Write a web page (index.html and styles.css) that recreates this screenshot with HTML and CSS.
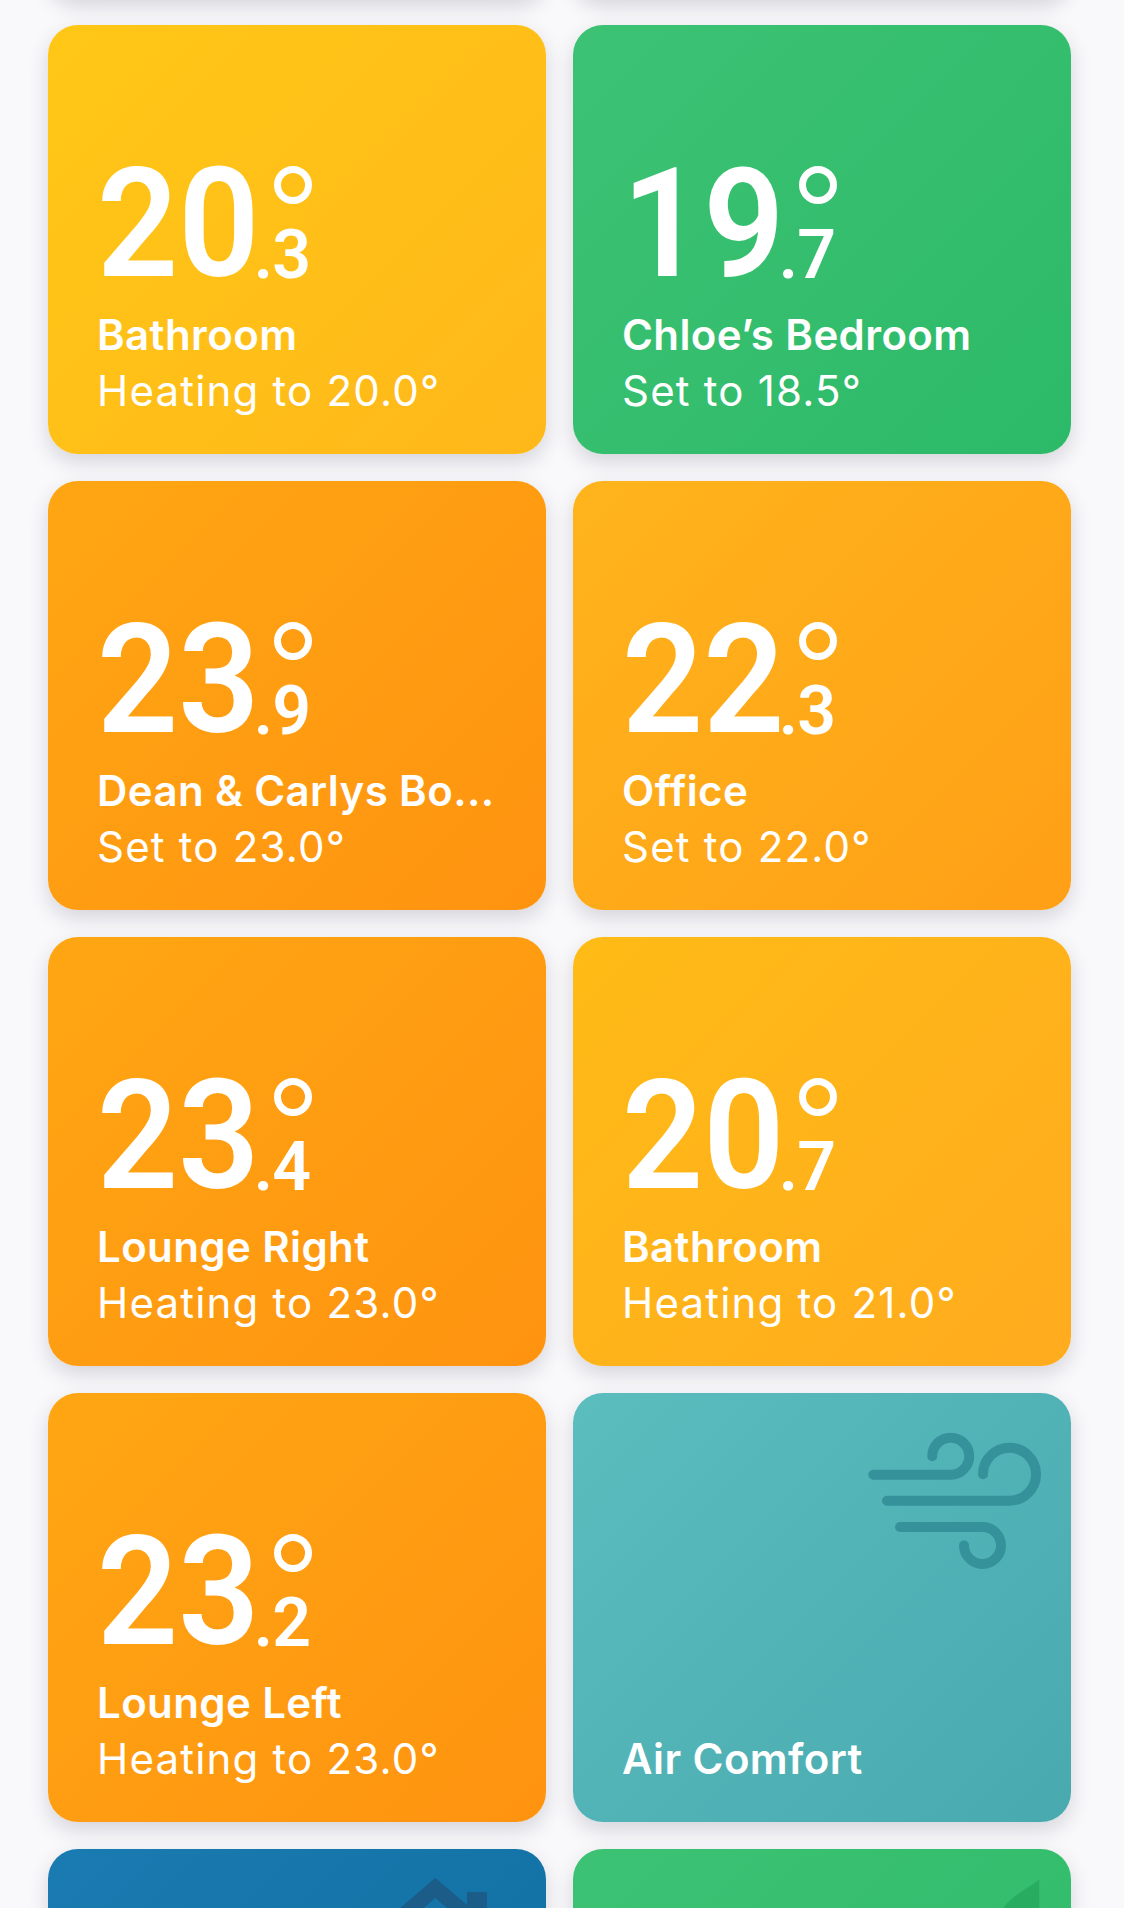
FILE: index.html
```html
<!DOCTYPE html>
<html lang="en">
<head>
  <meta charset="UTF-8">
  <meta name="viewport" content="width=device-width, initial-scale=1.0">
  <title>Home</title>
  <link rel="stylesheet" href="styles.css">
</head>
<body>
  <main class="tiles">
    <!-- row scrolled off the top, only its shadow shows -->
    <div class="tile tile-plain"></div>
    <div class="tile tile-plain"></div>

    <div class="tile tile-yellow">
      <div class="temp"><span class="temp-whole">20</span><span class="temp-side"><i class="ring"></i><span class="temp-frac">.3</span></span></div>
      <div class="tile-name">Bathroom</div>
      <div class="tile-status">Heating to 20.0°</div>
    </div>
    <div class="tile tile-green">
      <div class="temp"><span class="temp-whole">19</span><span class="temp-side"><i class="ring"></i><span class="temp-frac">.7</span></span></div>
      <div class="tile-name">Chloe’s Bedroom</div>
      <div class="tile-status">Set to 18.5°</div>
    </div>

    <div class="tile tile-orange">
      <div class="temp"><span class="temp-whole">23</span><span class="temp-side"><i class="ring"></i><span class="temp-frac">.9</span></span></div>
      <div class="tile-name">Dean &amp; Carlys Bo...</div>
      <div class="tile-status">Set to 23.0°</div>
    </div>
    <div class="tile tile-amber">
      <div class="temp"><span class="temp-whole">22</span><span class="temp-side"><i class="ring"></i><span class="temp-frac">.3</span></span></div>
      <div class="tile-name">Office</div>
      <div class="tile-status">Set to 22.0°</div>
    </div>

    <div class="tile tile-orange">
      <div class="temp"><span class="temp-whole">23</span><span class="temp-side"><i class="ring"></i><span class="temp-frac">.4</span></span></div>
      <div class="tile-name">Lounge Right</div>
      <div class="tile-status">Heating to 23.0°</div>
    </div>
    <div class="tile tile-gold">
      <div class="temp"><span class="temp-whole">20</span><span class="temp-side"><i class="ring"></i><span class="temp-frac">.7</span></span></div>
      <div class="tile-name">Bathroom</div>
      <div class="tile-status">Heating to 21.0°</div>
    </div>

    <div class="tile tile-orange">
      <div class="temp"><span class="temp-whole">23</span><span class="temp-side"><i class="ring"></i><span class="temp-frac">.2</span></span></div>
      <div class="tile-name">Lounge Left</div>
      <div class="tile-status">Heating to 23.0°</div>
    </div>
    <div class="tile tile-teal">
      <svg class="icon icon-wind" viewBox="0 0 220 180" width="220" height="180" fill="none" stroke="currentColor" stroke-width="10" stroke-linecap="round">
        <path d="M33.3 64.7H110.7A18.5 18.5 0 1 0 92.2 46.2"/>
        <path d="M47 90.7H169.5A26.5 26.5 0 1 0 143 64.2"/>
        <path d="M60 117H142.5A18.5 18.5 0 1 1 124 135.5"/>
      </svg>
      <div class="tile-name">Air Comfort</div>
    </div>

    <div class="tile tile-blue">
      <svg class="icon icon-house" viewBox="0 0 150 80" width="150" height="80" fill="currentColor">
        <path fill-rule="evenodd" d="M57.3 9L89 36V23H109V53L140 80H-26ZM57.3 29L-2 80H116.6Z"/>
      </svg>
    </div>
    <div class="tile tile-green">
      <svg class="icon icon-leaf" viewBox="0 0 50 60" width="50" height="60" fill="currentColor">
        <path d="M46.3 2.3C38 10 22 16 10 31C4 39 2 50 2 60H46.3Z"/>
      </svg>
    </div>
  </main>
</body>
</html>
```
FILE: styles.css
```css
html, body {
  height: 1908px;
  overflow: hidden;
}
body {
  margin: 0;
  background: #f9f9fb;
  font-family: "Inter", "Roboto", sans-serif;
  color: #fff;
}
.tiles {
  display: grid;
  grid-template-columns: 498px 498px;
  grid-auto-rows: 429px;
  gap: 27px;
  padding-left: 48px;
  margin-top: -431px;
}
.tile {
  position: relative;
  display: flex;
  flex-direction: column;
  justify-content: flex-end;
  padding: 0 0 35px 49px;
  border-radius: 30px;
  box-shadow: 0 8px 20px rgba(50, 50, 80, 0.18);
  overflow: hidden;
}
.tile-plain { background: #fff; }
.tile-yellow { background: linear-gradient(135deg, #ffc716, #ffb81a); }
.tile-green { background: linear-gradient(135deg, #3dc274, #2cba68); }
.tile-orange { background: linear-gradient(135deg, #ffa613, #ff9310); }
.tile-amber { background: linear-gradient(135deg, #ffb41c, #ff9f16); }
.tile-gold { background: linear-gradient(135deg, #ffbb16, #ffab1e); }
.tile-teal { background: linear-gradient(135deg, #5cbdbf, #48a9af); }
.tile-blue { background: linear-gradient(135deg, #1a7bb2, #0f6d9d); }

.temp {
  display: flex;
  align-items: flex-end;
  height: 118px;
  margin-bottom: 24px;
}
/* the digits in the app are a narrower face than Roboto */
.temp-whole {
  font-family: "Roboto", sans-serif;
  font-size: 153px;
  font-weight: 600;
  line-height: 118px;
  letter-spacing: -7px;
  transform: scaleX(0.93);
  transform-origin: left;
  margin-right: -11px;
}
.temp-whole::first-letter {
  letter-spacing: 0;
}
.temp-side {
  display: flex;
  flex-direction: column;
  align-items: flex-end;
  justify-content: flex-end;
}
.ring {
  width: 38px;
  height: 38px;
  box-sizing: border-box;
  border: 7px solid #fff;
  border-radius: 50%;
  margin: 0 -2px 23px 0;
}
.temp-frac {
  font-family: "Roboto", sans-serif;
  font-size: 68px;
  font-weight: 600;
  line-height: 56px;
  letter-spacing: -1px;
}
.tile-name {
  font-size: 42px;
  font-weight: 600;
  line-height: 56px;
  letter-spacing: 0.4px;
  white-space: nowrap;
}
.tile-status {
  font-size: 42px;
  line-height: 56px;
  letter-spacing: 1.2px;
  white-space: nowrap;
}
.icon {
  position: absolute;
}
.icon-wind {
  left: 267px;
  top: 17px;
  color: #35919a;
}
.icon-house {
  left: 330px;
  top: 20px;
  color: #1b5c88;
}
.icon-leaf {
  left: 420px;
  top: 28px;
  color: #28ad60;
}
```
